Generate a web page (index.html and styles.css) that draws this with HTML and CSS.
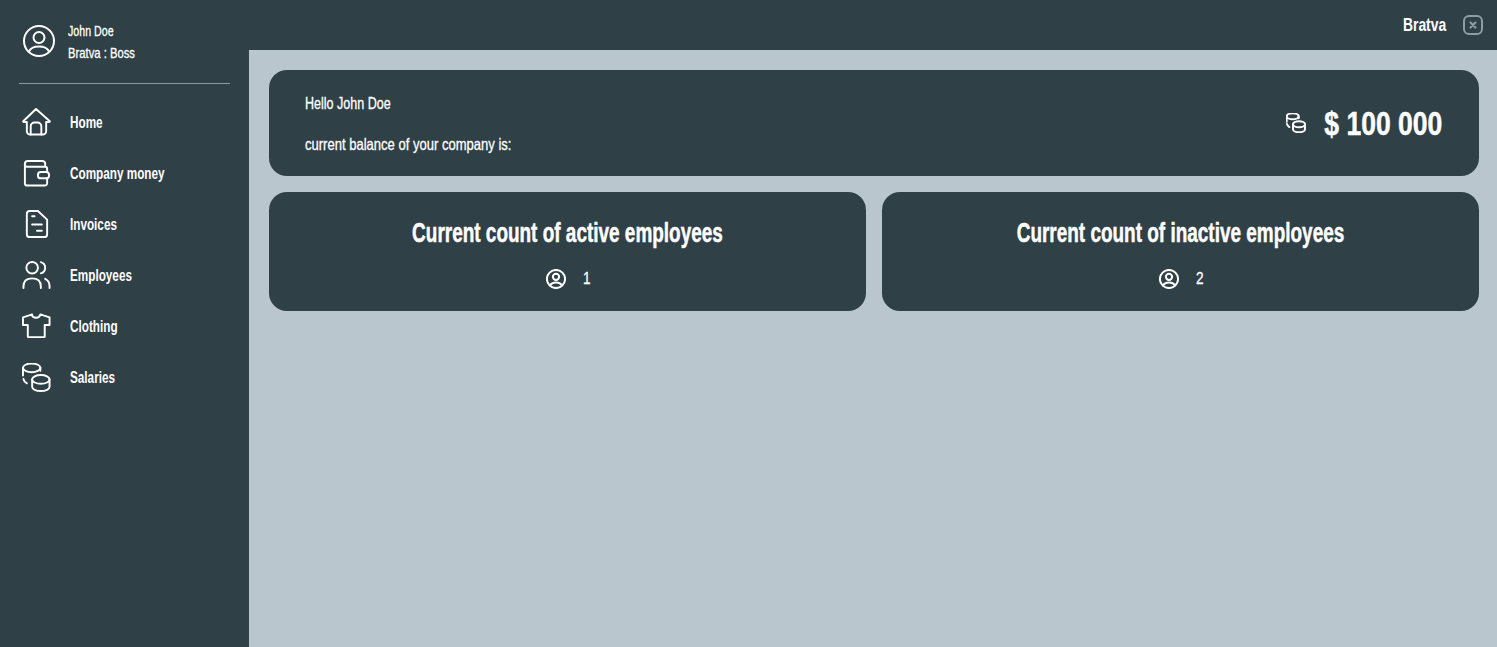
FILE: index.html
```html
<!DOCTYPE html>
<html lang="en">
  <head>
    <meta charset="utf-8" />
    <title>Bratva</title>
    <link rel="stylesheet" href="styles.css" />
  </head>
  <body>
    <aside class="sidebar">
      <div class="profile">
        <svg class="profile-icon" viewBox="0 0 32 32">
          <circle cx="16" cy="16" r="15" />
          <circle cx="16" cy="12.500" r="5.500" />
          <path d="M6 26.500c1.500-3.500 5-5 10-5s8.500 1.500 10 5" />
        </svg>
        <div class="profile-text">
          <div class="profile-name">John Doe</div>
          <div class="profile-role">Bratva : Boss</div>
        </div>
      </div>
      <hr class="divider" />
      <nav class="menu">
        <a class="menu-item">
          <svg class="menu-icon" viewBox="0 0 30 30">
            <path d="M14.500 1 1.500 13.500c-.5.500-.2 1 .5 1h3V24a3.500 3.500 0 0 0 3.500 3.500h13a3.500 3.500 0 0 0 3.500-3.500v-9.500h3c.7 0 1-.5.5-1z" />
            <path d="M9 27.500V19a4 4 0 0 1 4-4h3a4 4 0 0 1 4 4v8.500" />
          </svg>
          <span>Home</span>
        </a>
        <a class="menu-item">
          <svg class="menu-icon" viewBox="0 0 30 30">
            <path d="M24 7V5a3 3 0 0 0-3-3H6a3 3 0 0 0-3 3v20a2.500 2.500 0 0 0 2.500 2.500h18a2.500 2.500 0 0 0 2.500-2.500v-5" />
            <path d="M3 5v1a2 2 0 0 0 2 2h19a2 2 0 0 1 2 2v3.500" />
            <rect x="16.500" y="13.500" width="11.500" height="6.500" rx="3" />
          </svg>
          <span>Company money</span>
        </a>
        <a class="menu-item">
          <svg class="menu-icon" viewBox="0 0 30 30">
            <path d="M16.500 1H8a3 3 0 0 0-3 3v21a3 3 0 0 0 3 3h15a3 3 0 0 0 3-3V10z" />
            <path d="M10.500 6.500h2.500M10.500 15h10M15.500 21.500h5" />
          </svg>
          <span>Invoices</span>
        </a>
        <a class="menu-item">
          <svg class="menu-icon" viewBox="0 0 30 30">
            <circle cx="10.500" cy="7" r="6" />
            <path d="M19.500 1.200a6 6 0 0 1 0 11.600" />
            <path d="M1.500 28v-1.500c0-5.500 3-8.500 9-8.500s9 3 9 8.500V28" />
            <path d="M24 18.500c3 1.500 4.500 4 4.500 7.500v2" />
          </svg>
          <span>Employees</span>
        </a>
        <a class="menu-item">
          <svg class="menu-icon" viewBox="0 0 30 30">
            <path d="M10.500 2.500 1 5.500v8h5v12a.5.5 0 0 0 .5.5h16.500a.5.5 0 0 0 .5-.5v-12h5v-8l-9.500-3c-.5 2-2.200 3.500-4.500 3.500s-4-1.500-4.500-3.500z" />
          </svg>
          <span>Clothing</span>
        </a>
        <a class="menu-item">
          <svg class="menu-icon" viewBox="0 0 30 30">
            <ellipse cx="10" cy="5" rx="9" ry="4.500" />
            <path d="M19 5v3M1 5v8M1.500 16.500c.5 2 1.500 3.500 3.500 4.500" />
            <ellipse cx="19.500" cy="17" rx="9" ry="4.500" />
            <path d="M10.500 17v7.500c0 2.500 4 4.500 9 4.500s9-2 9-4.500V17" />
          </svg>
          <span>Salaries</span>
        </a>
      </nav>
    </aside>

    <div class="main">
      <header class="topbar">
        <span class="topbar-name">Bratva</span>
        <svg class="close-icon" viewBox="0 0 20 20">
          <rect x="1" y="1" width="18" height="18" rx="5" />
          <path class="close-x" d="M7.500 7.500l5 5M12.500 7.500l-5 5" />
        </svg>
      </header>

      <div class="content">
        <section class="card balance">
          <div class="balance-text">
            <div class="balance-hello">Hello John Doe</div>
            <div class="balance-label">current balance of your company is:</div>
          </div>
          <div class="balance-amount">
            <svg class="coins-icon" viewBox="0 0 30 30">
              <ellipse cx="10" cy="5" rx="9" ry="4.500" />
              <path d="M19 5v3M1 5v8M1.500 16.500c.5 2 1.500 3.500 3.500 4.500" />
              <ellipse cx="19.500" cy="17" rx="9" ry="4.500" />
              <path d="M10.500 17v7.500c0 2.500 4 4.500 9 4.500s9-2 9-4.500V17" />
            </svg>
            <span class="amount">$ 100 000</span>
          </div>
        </section>

        <div class="stats">
          <section class="card stat">
            <h2>Current count of active employees</h2>
            <div class="stat-count">
              <svg class="user-icon" viewBox="0 0 32 32">
                <circle cx="16" cy="16" r="14.500" />
                <circle cx="16" cy="12.500" r="5" />
                <path d="M6.500 26.500c1.500-3.500 5-5 9.500-5s8 1.500 9.500 5" />
              </svg>
              <span>1</span>
            </div>
          </section>
          <section class="card stat">
            <h2>Current count of inactive employees</h2>
            <div class="stat-count">
              <svg class="user-icon" viewBox="0 0 32 32">
                <circle cx="16" cy="16" r="14.500" />
                <circle cx="16" cy="12.500" r="5" />
                <path d="M6.500 26.500c1.500-3.500 5-5 9.500-5s8 1.500 9.500 5" />
              </svg>
              <span>2</span>
            </div>
          </section>
        </div>
      </div>
    </div>
  </body>
</html>
```

FILE: styles.css
```css
* {
  box-sizing: border-box;
}

html,
body {
  height: 100%;
}

body {
  margin: 0;
  display: flex;
  overflow: hidden;
  font-family: "Liberation Sans", sans-serif;
  color: #fff;
  background-color: #b9c6ce;
}

svg {
  display: block;
  flex-shrink: 0;
  fill: none;
  stroke: #fff;
  stroke-linecap: round;
  stroke-linejoin: round;
}

/* sidebar */
.sidebar {
  width: 249px;
  flex-shrink: 0;
  padding: 0 19px;
  background-color: #304047;
}

.profile {
  height: 83px;
  display: flex;
  align-items: center;
  padding: 0 0 2px 4px;
}

.profile-icon {
  width: 32px;
  height: 32px;
  margin-right: 13px;
  stroke-width: 2;
}

/* no condensed font here, so the text is squeezed sideways */
.profile-text {
  padding-top: 2px;
  font-size: 15px;
  line-height: 22px;
  white-space: nowrap;
  -webkit-text-stroke: 0.3px #fff;
}

.profile-name {
  transform: scaleX(0.71);
  transform-origin: left;
}

.profile-role {
  transform: scaleX(0.75);
  transform-origin: left;
}

.divider {
  margin: 0;
  border: none;
  border-top: 1px solid #8a9ba3;
}

.menu {
  padding-top: 13px;
}

.menu-item {
  height: 51px;
  display: flex;
  align-items: center;
  padding-left: 3px;
  font-size: 17px;
  font-weight: bold;
}

.menu-item span {
  white-space: nowrap;
  transform: scaleX(0.69);
  transform-origin: left;
}

.menu-icon {
  width: 29px;
  height: 29px;
  margin-right: 19px;
  stroke-width: 2;
}

/* top bar */
.main {
  flex: 1;
  min-width: 0;
}

.topbar {
  height: 50px;
  display: flex;
  align-items: center;
  justify-content: flex-end;
  padding-right: 14px;
  background-color: #304047;
}

.topbar-name {
  margin-right: 17px;
  font-size: 19px;
  font-weight: bold;
  transform: scaleX(0.73);
  transform-origin: right;
}

.close-icon {
  width: 20px;
  height: 20px;
  stroke: #8f9ca3;
  stroke-width: 2;
}

.close-x {
  stroke-width: 2.2;
}

/* cards */
.content {
  padding: 20px 18px 20px 20px;
}

.card {
  border-radius: 18px;
  background-color: #304047;
}

.balance {
  height: 106px;
  display: flex;
  align-items: center;
  justify-content: space-between;
  padding: 0 36px;
}

.balance-text {
  padding-top: 2px;
  font-size: 16.500px;
  line-height: 41px;
  white-space: nowrap;
  -webkit-text-stroke: 0.3px #fff;
}

.balance-hello {
  transform: scaleX(0.76);
  transform-origin: left;
}

.balance-label {
  transform: scaleX(0.79);
  transform-origin: left;
}

.balance-amount {
  display: flex;
  align-items: center;
  font-size: 34px;
  font-weight: bold;
}

.coins-icon {
  width: 20px;
  height: 20px;
  margin-right: 18px;
  stroke-width: 3;
}

.amount {
  margin-left: -33px;
  margin-right: 1px;
  white-space: nowrap;
  -webkit-text-stroke: 0.5px #fff;
  transform: scaleX(0.78);
  transform-origin: right;
}

.stats {
  display: grid;
  grid-template-columns: 1fr 1fr;
  gap: 16px;
  margin-top: 16px;
}

.stat {
  height: 119px;
  padding-top: 21px;
  text-align: center;
}

.stat h2 {
  margin: 0;
  font-size: 28px;
  line-height: 40px;
  font-weight: bold;
  white-space: nowrap;
  -webkit-text-stroke: 0.5px #fff;
  transform: scaleX(0.677);
}

.stat-count {
  display: flex;
  align-items: center;
  justify-content: center;
  gap: 16px;
  margin-top: 16px;
  font-size: 17px;
}

.stat-count span {
  margin-right: -2px;
  -webkit-text-stroke: 0.3px #fff;
  transform: scaleX(0.8);
}

.user-icon {
  width: 20px;
  height: 20px;
  stroke-width: 3.200;
}
```
